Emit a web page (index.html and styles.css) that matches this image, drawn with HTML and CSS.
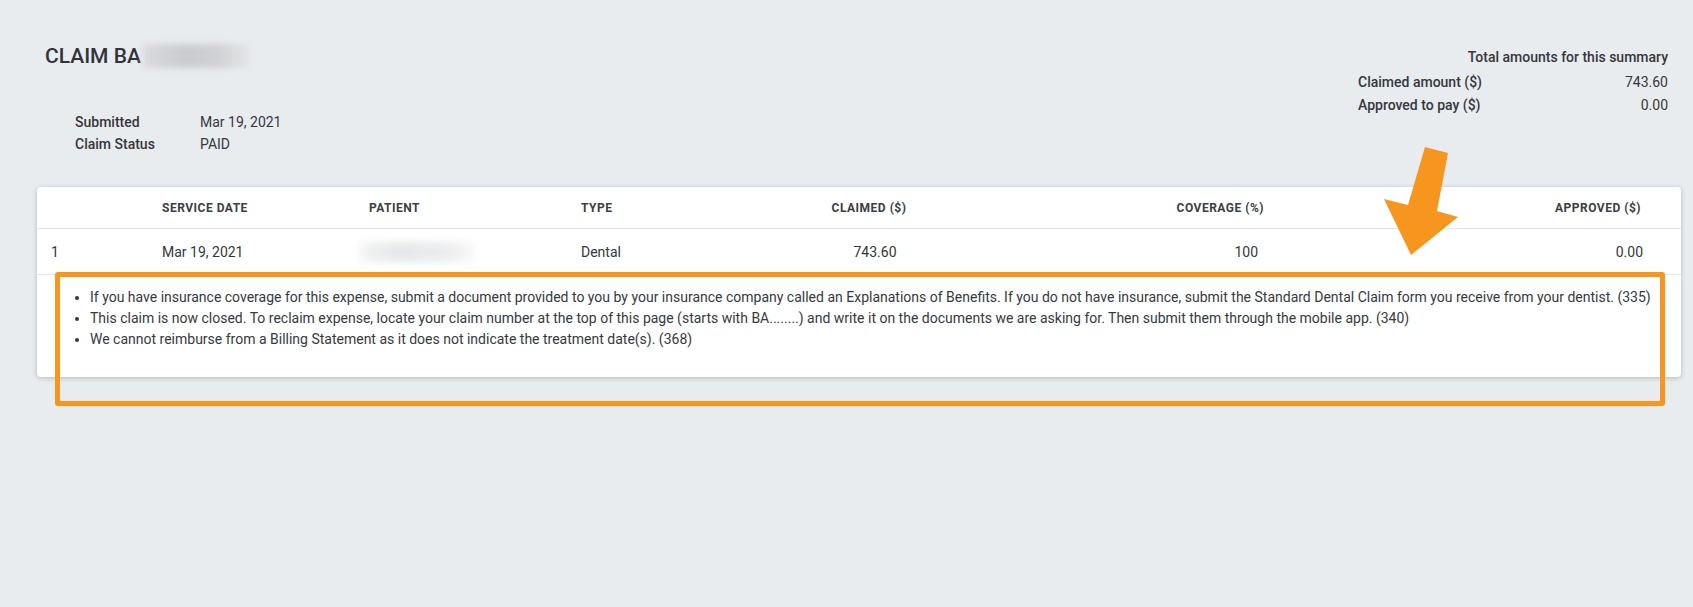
FILE: index.html
```html
<!DOCTYPE html>
<html lang="en">
<head>
	<meta charset="utf-8">
	<meta name="viewport" content="width=device-width, initial-scale=1">
	<title>Claim Summary</title>
	<link rel="stylesheet" href="styles.css">
</head>
<body>
	<div class="page">
		<!-- Top Section -->
		<div class="top">
			<div class="claim-info">
				<h1 class="claim-title">CLAIM BA<span class="blur blur-title"></span></h1>
				<div class="details">
					<div class="label">Submitted</div>
					<div class="value">Mar 19, 2021</div>
					<div class="label">Claim Status</div>
					<div class="value">PAID</div>
				</div>
			</div>

			<div class="summary">
				<div class="summary-title">Total amounts for this summary</div>
				<div class="summary-rows">
					<div class="label">Claimed amount ($)</div>
					<div class="amount">743.60</div>
					<div class="label">Approved to pay ($)</div>
					<div class="amount">0.00</div>
				</div>
			</div>
		</div>

		<!-- Claim Lines -->
		<div class="card">
			<div class="grid head">
				<div></div>
				<div>SERVICE DATE</div>
				<div>PATIENT</div>
				<div>TYPE</div>
				<div class="center head-claimed">CLAIMED ($)</div>
				<div class="right">COVERAGE (%)</div>
				<div class="right head-approved">APPROVED ($)</div>
			</div>
			<div class="grid row">
				<div>1</div>
				<div>Mar 19, 2021</div>
				<div><span class="blur blur-patient"></span></div>
				<div>Dental</div>
				<div class="center cell-claimed">743.60</div>
				<div class="right cell-coverage">100</div>
				<div class="right">0.00</div>
			</div>
			<div class="notes">
				<ul>
					<li>If you have insurance coverage for this expense, submit a document provided to you by your insurance company called an Explanations of Benefits. If you do not have insurance, submit the Standard Dental Claim form you receive from your dentist. (335)</li>
					<li>This claim is now closed. To reclaim expense, locate your claim number at the top of this page (starts with BA........) and write it on the documents we are asking for. Then submit them through the mobile app. (340)</li>
					<li>We cannot reimburse from a Billing Statement as it does not indicate the treatment date(s). (368)</li>
				</ul>
			</div>
		</div>

		<!-- Annotation -->
		<div class="highlight"></div>
		<svg class="arrow" width="82" height="114" viewBox="0 0 82 114">
			<polygon points="45,3 68,9 57,67 78,73 31,111 4,55 28,61" fill="#f6961f"/>
		</svg>
	</div>
</body>
</html>
```

FILE: styles.css
```css
body {
	margin: 0;
	background: #e9ecef;
	font-family: Roboto, "Liberation Sans", Arial, sans-serif;
	color: #34373c;
}

.page {
	position: relative;
	height: 607px;
	padding: 42px 12px 0 37px;
	box-sizing: border-box;
}

.top {
	display: flex;
	justify-content: space-between;
	align-items: flex-start;
	padding: 0 13px 0 8px;
}

.claim-title {
	margin: 0;
	font-size: 21px;
	font-weight: 500;
	line-height: 28px;
	color: #30343a;
	display: flex;
	align-items: center;
}

.blur {
	display: inline-block;
	background: linear-gradient(90deg, #d9dbde, #c9cbcf 40%, #cfd1d4 70%, #e2e4e6);
	filter: blur(3px);
}

.blur-title {
	width: 106px;
	height: 24px;
	margin-left: 2px;
}

.details {
	display: grid;
	grid-template-columns: 125px auto;
	margin: 41px 0 0 30px;
	font-size: 14px;
	line-height: 22px;
}

.details .label {
	font-weight: 500;
}

.summary {
	margin-top: 5px;
	font-size: 14px;
	text-align: right;
}

.summary-title {
	font-weight: 500;
	line-height: 20px;
	margin-bottom: 4px;
}

.summary-rows {
	display: grid;
	grid-template-columns: 124px 186px;
	line-height: 23px;
}

.summary-rows .label {
	font-weight: 500;
	text-align: left;
}

.card {
	margin-top: 32px;
	background: white;
	border-radius: 4px;
	box-shadow: 0 1px 5px rgba(0, 0, 0, 0.22);
}

.grid {
	display: grid;
	grid-template-columns: 111px 207px 212px 179px 224px 280px 379px;
	align-items: center;
	padding: 0 38px 0 14px;
	border-bottom: 1px solid #e3e5e8;
}

.head {
	height: 41px;
	font-size: 12px;
	font-weight: 700;
	letter-spacing: 0.5px;
	color: #3b3e43;
}

.row {
	height: 45px;
	font-size: 14px;
}

.center {
	text-align: center;
}

.right {
	text-align: right;
}

.head-claimed {
	padding-right: 6px;
}

.cell-claimed {
	padding-left: 6px;
}

.cell-coverage {
	padding-right: 6px;
}

.head-approved {
	padding-right: 2px;
}

.blur-patient {
	width: 113px;
	height: 20px;
	margin-left: -9px;
	vertical-align: middle;
	background: linear-gradient(90deg, #f4f4f5, #e6e7e8 30%, #eaebec 70%, #f6f6f7);
	filter: blur(4px);
}

.notes {
	padding: 12px 0 27px 0;
}

.notes ul {
	margin: 0;
	padding-left: 53px;
	font-size: 14px;
	line-height: 21px;
	color: #36393e;
}

.highlight {
	position: absolute;
	left: 55px;
	top: 272px;
	width: 1610px;
	height: 134px;
	box-sizing: border-box;
	border: 5px solid #f6961f;
	border-radius: 3px;
}

.arrow {
	position: absolute;
	left: 1380px;
	top: 144px;
}
```
